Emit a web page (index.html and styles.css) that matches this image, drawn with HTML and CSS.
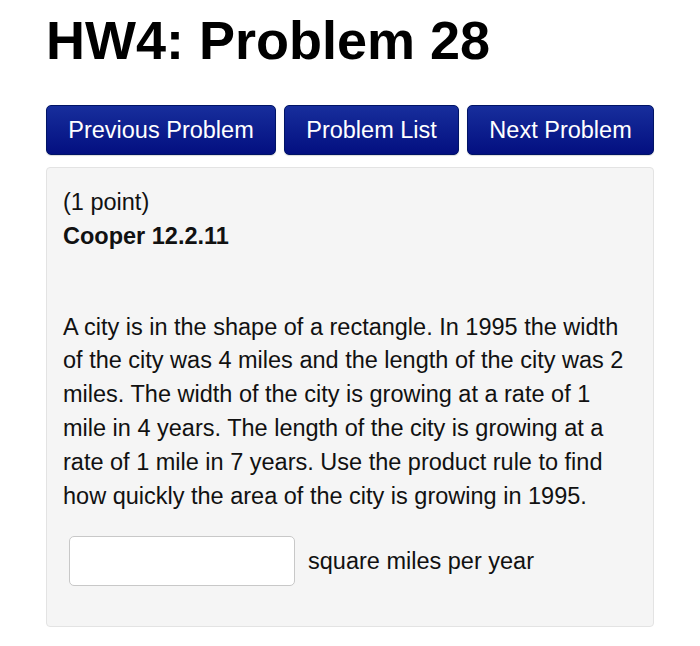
FILE: index.html
```html
<!DOCTYPE html>
<html>
<head>
<meta charset="utf-8">
<link rel="stylesheet" href="styles.css">
</head>
<body>
<div class="page">
  <h1 class="title">HW4: Problem 28</h1>
  <div class="nav">
    <a class="btn">Previous Problem</a>
    <a class="btn">Problem List</a>
    <a class="btn">Next Problem</a>
  </div>
  <div class="panel">
    <div class="points">(1 point)</div>
    <div class="source">Cooper 12.2.11</div>
    <p class="text">A city is in the shape of a rectangle. In 1995 the width of the city was 4 miles and the length of the city was 2 miles. The width of the city is growing at a rate of 1 mile in 4 years. The length of the city is growing at a rate of 1 mile in 7 years. Use the product rule to find how quickly the area of the city is growing in 1995.</p>
    <div class="answer">
      <input class="field" type="text">
      <span class="unit">square miles per year</span>
    </div>
  </div>
</div>
</body>
</html>
```
FILE: styles.css
```css
html, body {
  margin: 0;
  padding: 0;
  background: #fff;
}
.page {
  padding: 0 46px;
  font-family: "Liberation Sans", Arial, sans-serif;
  color: #111;
}
.title {
  margin: 0;
  padding-top: 10px;
  font-size: 54px;
  line-height: 60px;
  font-weight: bold;
  color: #000;
}
.nav {
  display: flex;
  gap: 8px;
  margin-top: 35px;
}
.btn {
  display: block;
  height: 48px;
  line-height: 48px;
  padding: 0 21px;
  font-size: 23.5px;
  color: #fff;
  background: linear-gradient(#172e9c, #030f80);
  border: 1px solid #001466;
  border-radius: 5px;
  box-shadow: 0 1px 1px rgba(0,0,0,0.15);
  flex-grow: 1;
  text-align: center;
}
.panel {
  margin-top: 12px;
  background: #f5f5f5;
  border: 1px solid #e3e3e3;
  border-radius: 4px;
  padding: 17px 16px 40px 16px;
  font-size: 23.5px;
  line-height: 33.6px;
}
.points {
  line-height: 35px;
}
.source {
  font-weight: bold;
}
.text {
  margin: 57px 0 0 0;
  line-height: 33.8px;
}
.answer {
  display: flex;
  align-items: center;
  gap: 13px;
  margin-top: 23px;
  padding-left: 6px;
}
.field {
  width: 226px;
  height: 50px;
  box-sizing: border-box;
  border: 1px solid #c8c8c8;
  border-radius: 5px;
  background: #fff;
  margin: 0;
  font-size: 21px;
}
.unit {
  color: #111;
}
```
